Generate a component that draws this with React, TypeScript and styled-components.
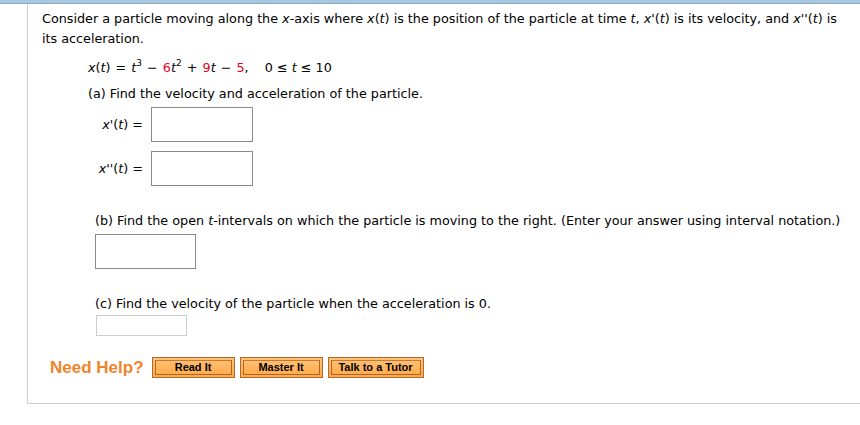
import React from 'react';
import styled, { createGlobalStyle } from 'styled-components';

const GlobalStyle = createGlobalStyle`
  html, body {
    margin: 0;
    padding: 0;
    background: #fff;
  }
  body {
    font-family: 'DejaVu Sans', Verdana, sans-serif;
    color: #000;
  }
`;

const TopBar = styled.div`
  height: 3px;
  background: #a9c8e0;
  border-bottom: 1px solid #86abc9;
`;

const Panel = styled.div`
  margin-left: 27px;
  height: 400px;
  box-sizing: border-box;
  border-left: 1px solid #cfcfcf;
  border-bottom: 1px solid #cfcfcf;
  padding: 5px 0 0 14px;
  font-size: 12.75px;
`;

const Intro = styled.p`
  margin: 0;
  line-height: 20px;
`;

const Indent = styled.div<{ $left: number; $top: number }>`
  margin-left: ${(p) => p.$left}px;
  margin-top: ${(p) => p.$top}px;
  line-height: 18px;
`;

const Red = styled.span`
  color: #e8001c;
`;

const Var = styled.i`
  font-style: italic;
`;

const Op = styled.span`
  margin: 0 1px;
`;

const Sup = styled.sup`
  font-size: 9px;
  line-height: 0;
  vertical-align: 6px;
`;

const AnswerRow = styled.div<{ $top: number }>`
  display: flex;
  align-items: center;
  margin-top: ${(p) => p.$top}px;
  margin-left: 46px;
`;

const Label = styled.span`
  width: 55px;
  text-align: right;
  margin-right: 8px;
  white-space: nowrap;
`;

const Box = styled.div<{ $w: number; $h: number; $light?: boolean }>`
  width: ${(p) => p.$w}px;
  height: ${(p) => p.$h}px;
  box-sizing: border-box;
  border: 1px solid ${(p) => (p.$light ? '#cdcdcd' : '#8a8a8a')};
  background: #fff;
`;

const HelpRow = styled.div`
  display: flex;
  align-items: center;
  margin-top: 21px;
  margin-left: 8px;
  gap: 5px;
`;

const HelpText = styled.span`
  font-family: 'Liberation Sans', Arial, sans-serif;
  font-weight: bold;
  font-size: 17px;
  color: #f0842a;
  margin-right: 3px;
`;

const HelpButton = styled.button<{ $w: number }>`
  width: ${(p) => p.$w}px;
  height: 21px;
  padding: 2px;
  border: 1px solid #b06a2c;
  background: linear-gradient(#ffc276, #ffa948);
  cursor: pointer;
  & > span {
    display: block;
    height: 100%;
    box-sizing: border-box;
    border: 1px solid #a8662c;
    border-top-color: #c27a38;
    font-family: 'Liberation Sans', Arial, sans-serif;
    font-weight: bold;
    font-size: 11px;
    line-height: 13px;
    color: #000;
  }
`;

export default function App() {
  return (
    <>
      <GlobalStyle />
      <TopBar />
      <Panel>
        <Intro>
          Consider a particle moving along the <Var>x</Var>-axis where <Var>x</Var>(<Var>t</Var>) is
          the position of the particle at time <Var>t</Var>, <Var>x</Var>'(<Var>t</Var>) is its velocity,
          and <Var>x</Var>''(<Var>t</Var>) is
          <br />
          its acceleration.
        </Intro>
        <Indent $left={46} $top={10}>
          <Var>x</Var>(<Var>t</Var>) <Op>=</Op> <Var>t</Var>
          <Sup>3</Sup> <Op>&minus;</Op> <Red>6</Red>
          <Var>t</Var>
          <Sup>2</Sup> <Op>+</Op> <Red>9</Red>
          <Var>t</Var> <Op>&minus;</Op> <Red>5</Red>,&nbsp;&nbsp;&nbsp; 0 &le; <Var>t</Var> &le; 10
        </Indent>
        <Indent $left={46} $top={8}>
          (a) Find the velocity and acceleration of the particle.
        </Indent>
        <AnswerRow $top={4}>
          <Label>
            <Var>x</Var>'(<Var>t</Var>) =
          </Label>
          <Box $w={102} $h={35} />
        </AnswerRow>
        <AnswerRow $top={9}>
          <Label>
            <Var>x</Var>''(<Var>t</Var>) =
          </Label>
          <Box $w={102} $h={35} />
        </AnswerRow>
        <Indent $left={53} $top={26}>
          (b) Find the open <Var>t</Var>-intervals on which the particle is moving to the right. (Enter your
          answer using interval notation.)
        </Indent>
        <Indent $left={53} $top={4}>
          <Box $w={101} $h={35} />
        </Indent>
        <Indent $left={53} $top={26}>
          (c) Find the velocity of the particle when the acceleration is 0.
        </Indent>
        <Indent $left={54} $top={2}>
          <Box $w={91} $h={21} $light />
        </Indent>
        <HelpRow>
          <HelpText>Need Help?</HelpText>
          <HelpButton $w={83}>
            <span>Read It</span>
          </HelpButton>
          <HelpButton $w={83}>
            <span>Master It</span>
          </HelpButton>
          <HelpButton $w={96}>
            <span>Talk to a Tutor</span>
          </HelpButton>
        </HelpRow>
      </Panel>
    </>
  );
}
